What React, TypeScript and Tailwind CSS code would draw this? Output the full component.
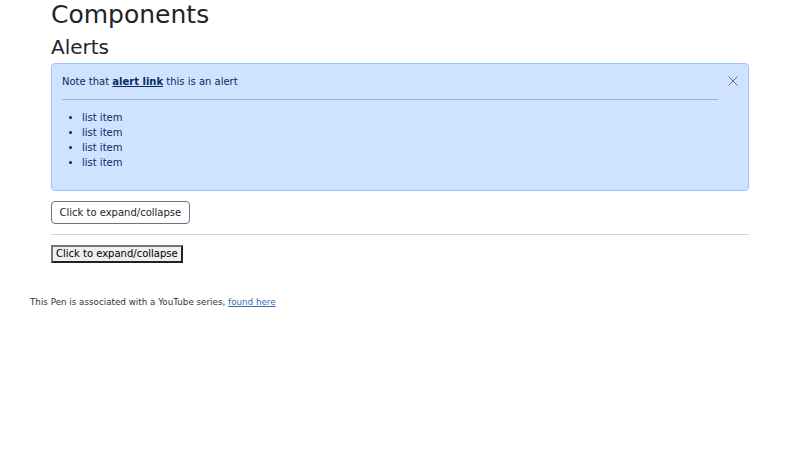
export default function App() {
  return (
    <div className="min-h-[450px] bg-white font-['DejaVu_Sans',sans-serif] text-[10px] leading-[15px] text-[#212529]">
      <div className="mx-[51px]">
        <h1 className="mb-[5px] text-[25px] font-normal leading-[30px]">Components</h1>
        <h2 className="mb-[4px] text-[20px] font-normal leading-[24px]">Alerts</h2>

        <div className="relative mb-[10px] rounded-[4px] border border-[#9ec5fe] bg-[#cfe2ff] py-[10px] pl-[10px] pr-[30px] text-[#052c65]">
          <p>
            Note that{" "}
            <a href="#" className="font-bold text-[#052c65] underline">
              alert link
            </a>{" "}
            this is an alert
          </p>
          <hr className="my-[10px] border-t border-[#052c65] opacity-25" />
          <ul className="mb-[10px] list-disc pl-[20px]">
            <li>list item</li>
            <li>list item</li>
            <li>list item</li>
            <li>list item</li>
          </ul>
          <button
            type="button"
            aria-label="Close"
            className="absolute right-0 top-0 px-[10px] py-[12px] text-black opacity-50"
          >
            <svg width="10" height="10" viewBox="0 0 16 16" fill="none">
              <path d="M1 1l14 14M15 1L1 15" stroke="currentColor" strokeWidth="1.6" />
            </svg>
          </button>
        </div>

        <div className="flex">
          <button
            type="button"
            className="rounded-[4px] border border-[#6c757d] px-[7.5px] py-[3px] text-[10px] leading-[15px] text-[#212529]"
          >
            Click to expand/collapse
          </button>
        </div>

        <hr className="my-[10px] border-t border-[#d3d3d3]" />

        <div className="flex">
          <button
            type="button"
            className="border-2 border-t-[#767676] border-l-[#767676] border-r-[#222] border-b-[#222] bg-[#efefef] px-[3px] py-0 text-[10px] leading-[14px] text-black"
          >
            Click to expand/collapse
          </button>
        </div>
      </div>

      <p className="ml-[30px] mt-[33px] text-[8.75px] leading-[13px] text-[#333]">
        This Pen is associated with a YouTube series,{" "}
        <a href="#" className="text-[#2f6fb5] underline">
          found here
        </a>
      </p>
    </div>
  );
}
